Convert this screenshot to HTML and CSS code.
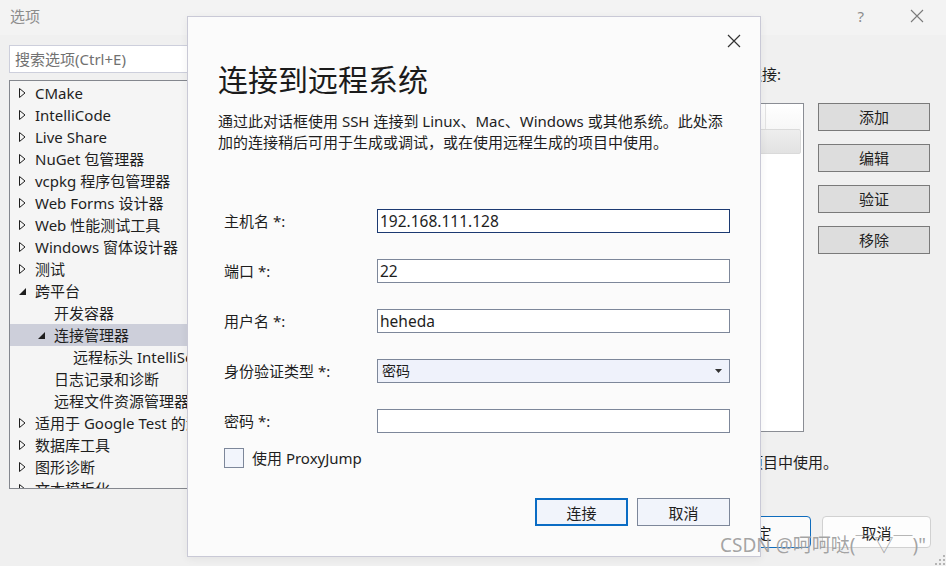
FILE: index.html
```html
<!DOCTYPE html>
<html lang="zh-CN">
<head>
<meta charset="utf-8">
<title>选项</title>
<link rel="stylesheet" href="styles.css">
</head>
<body>
<div class="window">
  <header class="titlebar">
    <span class="title">选项</span>
    <div class="title-actions">
      <span class="help">?</span>
      <svg class="win-close" width="14" height="14" viewBox="0 0 14 14"><path d="M1 1L13 13M13 1L1 13" stroke="#7a7a7a" stroke-width="1.1" fill="none"/></svg>
    </div>
  </header>
  <div class="body">
    <aside class="sidebar">
      <div class="search">搜索选项(Ctrl+E)</div>
      <div class="tree">
        <div class="row l0"><span class="tog"><svg width="7" height="10" viewBox="0 0 7 10"><path d="M0.5 0.5L6 5L0.5 9.5Z" fill="none" stroke="#1e1e1e"/></svg></span><span>CMake</span></div>
        <div class="row l0"><span class="tog"><svg width="7" height="10" viewBox="0 0 7 10"><path d="M0.5 0.5L6 5L0.5 9.5Z" fill="none" stroke="#1e1e1e"/></svg></span><span>IntelliCode</span></div>
        <div class="row l0"><span class="tog"><svg width="7" height="10" viewBox="0 0 7 10"><path d="M0.5 0.5L6 5L0.5 9.5Z" fill="none" stroke="#1e1e1e"/></svg></span><span>Live Share</span></div>
        <div class="row l0"><span class="tog"><svg width="7" height="10" viewBox="0 0 7 10"><path d="M0.5 0.5L6 5L0.5 9.5Z" fill="none" stroke="#1e1e1e"/></svg></span><span>NuGet 包管理器</span></div>
        <div class="row l0"><span class="tog"><svg width="7" height="10" viewBox="0 0 7 10"><path d="M0.5 0.5L6 5L0.5 9.5Z" fill="none" stroke="#1e1e1e"/></svg></span><span>vcpkg 程序包管理器</span></div>
        <div class="row l0"><span class="tog"><svg width="7" height="10" viewBox="0 0 7 10"><path d="M0.5 0.5L6 5L0.5 9.5Z" fill="none" stroke="#1e1e1e"/></svg></span><span>Web Forms 设计器</span></div>
        <div class="row l0"><span class="tog"><svg width="7" height="10" viewBox="0 0 7 10"><path d="M0.5 0.5L6 5L0.5 9.5Z" fill="none" stroke="#1e1e1e"/></svg></span><span>Web 性能测试工具</span></div>
        <div class="row l0"><span class="tog"><svg width="7" height="10" viewBox="0 0 7 10"><path d="M0.5 0.5L6 5L0.5 9.5Z" fill="none" stroke="#1e1e1e"/></svg></span><span>Windows 窗体设计器</span></div>
        <div class="row l0"><span class="tog"><svg width="7" height="10" viewBox="0 0 7 10"><path d="M0.5 0.5L6 5L0.5 9.5Z" fill="none" stroke="#1e1e1e"/></svg></span><span>测试</span></div>
        <div class="row l0"><span class="tog"><svg width="7" height="7" viewBox="0 0 7 7"><path d="M7 0L7 7L0 7Z" fill="#1e1e1e"/></svg></span><span>跨平台</span></div>
        <div class="row l1"><span class="tog"></span><span>开发容器</span></div>
        <div class="row l1 selected"><span class="tog"><svg width="7" height="7" viewBox="0 0 7 7"><path d="M7 0L7 7L0 7Z" fill="#1e1e1e"/></svg></span><span>连接管理器</span></div>
        <div class="row l2"><span class="tog"></span><span>远程标头 IntelliSense 管理器</span></div>
        <div class="row l1"><span class="tog"></span><span>日志记录和诊断</span></div>
        <div class="row l1"><span class="tog"></span><span>远程文件资源管理器</span></div>
        <div class="row l0"><span class="tog"><svg width="7" height="10" viewBox="0 0 7 10"><path d="M0.5 0.5L6 5L0.5 9.5Z" fill="none" stroke="#1e1e1e"/></svg></span><span>适用于 Google Test 的测试适配器</span></div>
        <div class="row l0"><span class="tog"><svg width="7" height="10" viewBox="0 0 7 10"><path d="M0.5 0.5L6 5L0.5 9.5Z" fill="none" stroke="#1e1e1e"/></svg></span><span>数据库工具</span></div>
        <div class="row l0"><span class="tog"><svg width="7" height="10" viewBox="0 0 7 10"><path d="M0.5 0.5L6 5L0.5 9.5Z" fill="none" stroke="#1e1e1e"/></svg></span><span>图形诊断</span></div>
        <div class="row l0"><span class="tog"><svg width="7" height="10" viewBox="0 0 7 10"><path d="M0.5 0.5L6 5L0.5 9.5Z" fill="none" stroke="#1e1e1e"/></svg></span><span>文本模板化</span></div>
      </div>
    </aside>
    <main class="page">
      <div class="conn-label">远程系统连接:</div>
      <div class="conn-row">
        <div class="conn-list">
          <div class="list-head"><span class="list-col"></span></div>
          <div class="list-item"></div>
        </div>
        <div class="conn-btns">
          <button class="side-btn">添加</button>
          <button class="side-btn">编辑</button>
          <button class="side-btn">验证</button>
          <button class="side-btn">移除</button>
        </div>
      </div>
      <p class="note">或在使用远程生成的项目中使用。</p>
      <div class="footer">
        <button class="foot-btn ok">确定</button>
        <button class="foot-btn">取消</button>
      </div>
    </main>
  </div>

  <section class="dialog">
    <div class="dlg-top">
      <svg width="16" height="16" viewBox="0 0 16 16"><path d="M2 2L14 14M14 2L2 14" stroke="#333" stroke-width="1.2" fill="none"/></svg>
    </div>
    <h1 class="dlg-title">连接到远程系统</h1>
    <p class="dlg-desc">通过此对话框使用 SSH 连接到 Linux、Mac、Windows 或其他系统。此处添<br>加的连接稍后可用于生成或调试，或在使用远程生成的项目中使用。</p>
    <div class="form">
      <label class="lbl">主机名 *:</label>
      <div class="field focus">192.168.111.128</div>
      <label class="lbl">端口 *:</label>
      <div class="field">22</div>
      <label class="lbl">用户名 *:</label>
      <div class="field">heheda</div>
      <label class="lbl">身份验证类型 *:</label>
      <div class="field combo"><span>密码</span><svg width="7" height="4" viewBox="0 0 7 4"><path d="M0 0L7 0L3.5 4Z" fill="#333"/></svg></div>
      <label class="lbl">密码 *:</label>
      <div class="field"></div>
    </div>
    <div class="check-row">
      <span class="checkbox"></span>
      <span class="check-label">使用 ProxyJump</span>
    </div>
    <div class="dlg-btns">
      <button class="dlg-btn primary">连接</button>
      <button class="dlg-btn">取消</button>
    </div>
  </section>

  <div class="watermark">CSDN @呵呵哒(￣▽￣)"</div>
  <svg class="grip" width="10" height="10" viewBox="0 0 10 10"><g fill="#b4b4b4"><rect x="8" y="0" width="2" height="2"/><rect x="8" y="4" width="2" height="2"/><rect x="4" y="4" width="2" height="2"/><rect x="8" y="8" width="2" height="2"/><rect x="4" y="8" width="2" height="2"/><rect x="0" y="8" width="2" height="2"/></g></svg>
</div>
</body>
</html>
```

FILE: styles.css
```css
* { box-sizing: border-box; }
html, body { margin: 0; padding: 0; }
body {
  font-family: "Noto Sans", "Noto Sans CJK SC", sans-serif;
  color: #1e1e1e;
  background: #f0f0f0;
}
button { font-family: inherit; color: inherit; padding: 0; margin: 0; cursor: default; }
p, h1 { margin: 0; }

.window {
  position: relative;
  width: 946px;
  height: 566px;
  overflow: hidden;
  background: #f0f0f0;
}

/* title bar */
.titlebar {
  height: 35px;
  background: #f3f3f3;
  display: flex;
  justify-content: space-between;
  align-items: flex-start;
  padding: 6px 22px 0 10px;
}
.title { font-size: 15px; line-height: 20px; color: #8c8c8c; }
.title-actions { display: flex; align-items: center; height: 20px; }
.help { font-size: 15px; line-height: 20px; color: #8c8c8c; }
.win-close { margin-left: 46px; }

/* body */
.body { display: flex; height: 531px; }

.sidebar { width: 188px; padding: 10px 0 0 9px; flex: none; }
.search {
  height: 28px;
  border: 1px solid #cdcfdc;
  border-right: none;
  background: #fff;
  padding-left: 5px;
  font-size: 15px;
  line-height: 26px;
  color: #717171;
  white-space: nowrap;
  overflow: hidden;
}
.tree {
  margin-top: 7px;
  height: 409px;
  border: 1px solid #84878e;
  border-right: none;
  background: #f5f5f5;
  padding-top: 1px;
  overflow: hidden;
}
.row {
  display: flex;
  align-items: center;
  height: 22px;
  font-size: 15px;
  line-height: 22px;
  white-space: nowrap;
}
.row.l0 { padding-left: 9px; }
.row.l1 { padding-left: 28px; }
.row.l2 { padding-left: 47px; }
.row.selected { background: #cdcfda; }
.tog { width: 16px; flex: none; display: flex; align-items: center; }

/* page behind */
.page { flex: 1; padding-right: 16px; font-size: 15px; overflow: hidden; }
.conn-label { margin-top: 29px; line-height: 20px; padding-left: 499px; white-space: nowrap; }
.conn-row { margin-top: 19px; display: flex; gap: 14px; }
.conn-list {
  flex: 1;
  height: 329px;
  background: #fff;
  border: 1px solid #8a8d94;
  padding: 0 2px 0 0;
}
.list-head { height: 25px; display: flex; justify-content: flex-end; background: linear-gradient(#ffffff, #f7f7f7); }
.list-col { width: 1px; height: 25px; background: #e3e3e3; margin-right: 35px; }
.list-item {
  height: 25px;
  border: 1px solid #dadada;
  border-radius: 2px;
  background: linear-gradient(#eeeeee, #e2e2e2);
}
.conn-btns { width: 112px; display: flex; flex-direction: column; gap: 13px; }
.side-btn {
  height: 28px;
  background: #dddddd;
  border: 1px solid #7a7a7a;
  font-size: 15px;
  line-height: 24px;
}
.note { margin-top: 20px; line-height: 20px; padding-left: 425px; white-space: nowrap; }
.footer { margin-top: 44px; margin-right: -1px; display: flex; justify-content: flex-end; gap: 11px; }
.foot-btn {
  width: 109px;
  height: 32px;
  border: 1px solid #d1d1d1;
  border-radius: 4px;
  background: #fdfdfd;
  font-size: 15px;
}
.foot-btn.ok { border-color: #0f6cbd; background: #fbfbfb; }

/* dialog */
.dialog {
  position: absolute;
  left: 187px;
  top: 16px;
  width: 574px;
  height: 541px;
  background: #fbfbfb;
  border: 1px solid #c9c9d6;
  box-shadow: 0 2px 8px rgba(0, 0, 0, 0.06);
}
.dlg-top { display: flex; justify-content: flex-end; padding: 16px 18px 0 0; height: 32px; }
.dlg-title {
  margin-top: 11px;
  padding-left: 30px;
  font-size: 30px;
  line-height: 40px;
  font-weight: 400;
  color: #1b1b1b;
}
.dlg-desc {
  margin-top: 11px;
  padding-left: 30px;
  font-size: 15px;
  line-height: 21px;
  white-space: nowrap;
}
.form {
  margin-top: 56px;
  padding-left: 36px;
  display: grid;
  grid-template-columns: 153px 353px;
  row-gap: 26px;
}
.lbl { font-size: 15px; line-height: 24px; white-space: nowrap; }
.field {
  height: 24px;
  border: 1px solid #7d879a;
  background: #fff;
  padding-left: 2px;
  font-size: 15.5px;
  line-height: 22px;
}
.field.focus { border-color: #1c3a72; }
.field.combo {
  background: #eff2fb;
  display: flex;
  justify-content: space-between;
  align-items: center;
  padding: 0 7px 0 4px;
  font-size: 14px;
}
.check-row { margin-top: 15px; padding-left: 36px; display: flex; align-items: center; }
.checkbox {
  width: 20px;
  height: 20px;
  border: 1px solid #7d879a;
  background: #f2f5fc;
}
.check-label { margin-left: 8px; font-size: 15px; line-height: 20px; }
.dlg-btns { margin-top: 30px; padding-right: 30px; display: flex; justify-content: flex-end; gap: 9px; }
.dlg-btn {
  width: 93px;
  height: 28px;
  border: 1px solid #7d879a;
  background: #f1f4fb;
  font-size: 15px;
}
.dlg-btn.primary { border: 2px solid #0a6cc4; }

.watermark {
  position: absolute;
  left: 720px;
  top: 533px;
  font-size: 19px;
  line-height: 24px;
  color: rgba(140, 140, 140, 0.8);
  white-space: nowrap;
  text-shadow: 0 0 1px rgba(255, 255, 255, 0.6);
}
.grip { position: absolute; right: 1px; bottom: 1px; }
```
